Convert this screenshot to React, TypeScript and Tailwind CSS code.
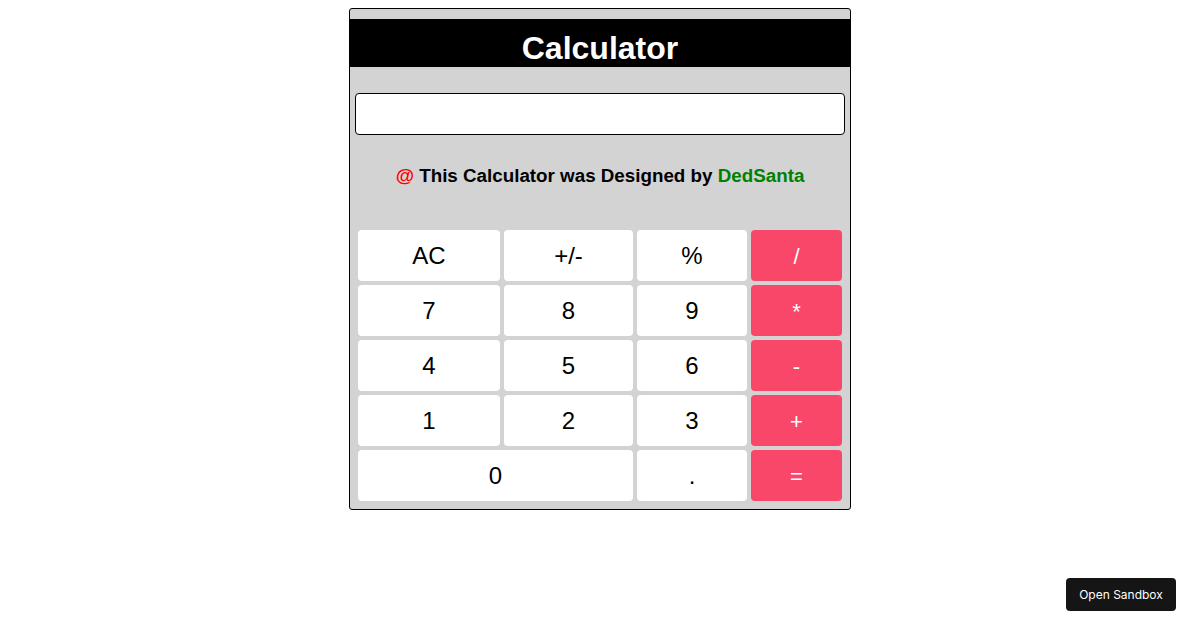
import React, { useState } from "react";

const keys: { label: string; kind: "num" | "op"; span?: boolean }[] = [
    { label: "AC", kind: "num" },
    { label: "+/-", kind: "num" },
    { label: "%", kind: "num" },
    { label: "/", kind: "op" },
    { label: "7", kind: "num" },
    { label: "8", kind: "num" },
    { label: "9", kind: "num" },
    { label: "*", kind: "op" },
    { label: "4", kind: "num" },
    { label: "5", kind: "num" },
    { label: "6", kind: "num" },
    { label: "-", kind: "op" },
    { label: "1", kind: "num" },
    { label: "2", kind: "num" },
    { label: "3", kind: "num" },
    { label: "+", kind: "op" },
    { label: "0", kind: "num", span: true },
    { label: ".", kind: "num" },
    { label: "=", kind: "op" },
];

function App() {
    const [value, setValue] = useState("");

    function press(label: string) {
        if (label === "AC") return setValue("");
        if (label === "=") {
            try {
                // eslint-disable-next-line no-new-func
                setValue(String(Function(`return (${value})`)()));
            } catch {
                setValue("Error");
            }
            return;
        }
        if (label === "+/-") return setValue((v) => (v.startsWith("-") ? v.slice(1) : v ? "-" + v : v));
        if (label === "%") return setValue((v) => (v ? String(parseFloat(v) / 100) : v));
        setValue((v) => v + label);
    }

    return (
        <div className="min-h-screen bg-white font-['Liberation_Sans',Arial,sans-serif] relative">
            <div className="flex justify-center pt-2">
                <div className="w-[502px] bg-[#d3d3d3] border border-black rounded-[3px] pt-[10px] pb-2">
                    <h1 className="bg-black text-white text-center text-[32px] font-bold h-12 leading-[58px] overflow-hidden">
                        Calculator
                    </h1>
                    <div className="px-[5px] pt-[26px]">
                        <input
                            value={value}
                            onChange={(e) => setValue(e.target.value)}
                            className="w-full h-[42px] bg-white border border-black rounded-[4px] px-2 text-2xl outline-none"
                        />
                    </div>
                    <p className="text-center font-bold text-[18.8px] text-black mt-[30px] mb-[43px] leading-[22px]">
                        <span className="text-[#ff0000]">@</span> This Calculator was Designed by{" "}
                        <span className="text-[#008000]">DedSanta</span>
                    </p>
                    <div className="grid grid-cols-[142px_129px_110px_91px] gap-1 px-2">
                        {keys.map((k) => (
                            <button
                                key={k.label}
                                onClick={() => press(k.label)}
                                className={`h-[51px] rounded-[4px] ${k.span ? "col-span-2" : ""} ${
                                    k.kind === "op"
                                        ? "bg-[#f9476a] text-white text-[22px] pt-[2px]"
                                        : "bg-white text-black text-[24px]"
                                }`}
                            >
                                {k.label}
                            </button>
                        ))}
                    </div>
                </div>
            </div>
            <button className="absolute left-[1066px] top-[578px] w-[110px] h-[33px] bg-[#151515] text-white text-[12px] rounded-[4px] font-['Inter',sans-serif]">
                Open Sandbox
            </button>
        </div>
    );
}

export default App;
